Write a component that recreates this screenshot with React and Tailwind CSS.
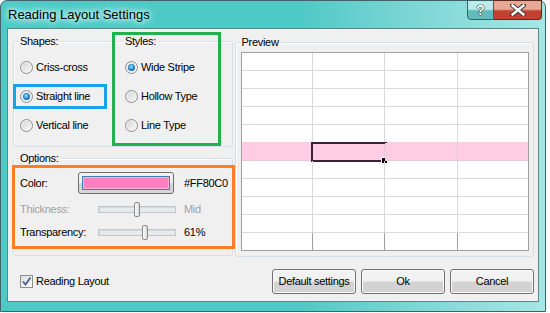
import React from "react";

// shared text style for dialog body
const body = "font-['Liberation_Sans',Arial,sans-serif] text-[11px] tracking-[-0.3px] text-black";

const Radio = ({ checked }) => (
	<span className="flex h-[13px] w-[13px] shrink-0 items-center justify-center rounded-full border border-[#8e8f8f] bg-linear-to-br from-[#d4d4d4] to-[#fbfbfb] shadow-[inset_0_0_0_1px_#f3f3f3]">
		{checked && (
			<span className="h-[7px] w-[7px] rounded-full bg-[radial-gradient(circle_at_45%_40%,#9ee4ff_0%,#2d8fd5_45%,#0c3466_100%)]" />
		)}
	</span>
);

const RadioRow = ({ label, checked, children }) => (
	<div className="relative flex h-[29px] items-center gap-[3px]">
		<Radio checked={checked} />
		<span>{label}</span>
		{children}
	</div>
);

const Legend = ({ children, className = "" }) => (
	<div className={`-mt-[8px] flex h-[14px] items-center ${className}`}>
		<span className="-mx-[2px] bg-[#f0f0f0] px-[2px] leading-[14px]">{children}</span>
	</div>
);

const Slider = ({ at }) => (
	<div className="relative h-[7px] w-[78px] border border-[#c3c7ca] bg-[#e7eaea] shadow-[inset_1px_1px_0_#d6d9db]">
		<span
			className={`absolute -top-[5px] h-[15px] w-[6px] rounded-[2px] border border-[#8a8a8a] bg-linear-to-r from-[#ffffff] to-[#d9d9d9] ${at}`}
		/>
	</div>
);

const Button = ({ children }) => (
	<div className="flex h-[25px] w-[84px] items-center justify-center rounded-[3px] border border-[#707070] bg-linear-to-b from-[#f2f2f2] from-45% to-[#d2d2d2] to-55% shadow-[inset_0_0_0_1px_#fbfbfb]">
		{children}
	</div>
);

const rows = Array.from({ length: 11 }, (_, i) => i);
const cols = [0, 1, 2, 3];

const App = () => {
	return (
		<div className="h-[313px] w-[550px] bg-white">
			<div className="flex h-[312px] w-[546px] flex-col rounded-t-[7px] border border-[#3f6366] bg-linear-to-r from-[#4fc9c6] from-55% to-[#a6e6e6]">
				{/* title bar */}
				<div className="flex h-[27px] justify-between">
					<div className="self-center pl-[7px] pt-[1px] font-['Liberation_Sans',Arial,sans-serif] text-[13px] text-black [text-shadow:0_0_8px_#d4f6f4,0_0_8px_#d4f6f4,0_0_4px_#d4f6f4]">
						Reading Layout Settings
					</div>
					<div className="mr-[3px] -mt-[1px] flex h-[20px] self-start">
						<div className="flex h-[20px] w-[27px] items-center justify-center rounded-bl-[4px] border border-[#3c5f62] bg-linear-to-b from-[#b9ecea] from-45% to-[#62bcbc] to-55% font-['Liberation_Sans',Arial,sans-serif] text-[14px] font-bold text-white [text-shadow:0_0_1px_#222,0_0_1px_#222,0_0_1px_#222]">
							?
						</div>
						<div className="flex h-[20px] w-[48px] items-center justify-center rounded-br-[4px] border border-l-0 border-[#5a2a22] bg-linear-to-b from-[#e9a896] from-45% to-[#c3412f] to-55%">
							<svg width="16" height="12" viewBox="0 0 16 12">
								<path d="M2 1 L14 11 M14 1 L2 11" stroke="#3a3a3a" strokeWidth="4.5" strokeLinecap="square" />
								<path d="M2.5 1.5 L13.5 10.5 M13.5 1.5 L2.5 10.5" stroke="#ffffff" strokeWidth="2.4" strokeLinecap="square" />
							</svg>
						</div>
					</div>
				</div>

				{/* client area */}
				<div className={`ml-[6px] h-[274px] w-[532px] border border-[#5b8889] bg-[#f0f0f0] pl-[5px] pr-[4px] pt-[12px] ${body}`}>
					<div className="flex gap-[2px]">
						<div className="flex w-[220px] flex-col">
							{/* shapes / styles */}
							<div className="flex h-[106px] rounded-[3px] border border-[#d5dfe5] shadow-[inset_1px_1px_0_#fff]">
								<div className="flex w-[105px] flex-col pl-[6px]">
									<Legend>Shapes:</Legend>
									<div className="mt-[5px]">
										<RadioRow label="Criss-cross" />
										<RadioRow label="Straight line" checked>
											<span className="absolute -left-[7px] top-[2px] h-[25px] w-[94px] border-[3px] border-[#1aa2e6]" />
										</RadioRow>
										<RadioRow label="Vertical line" />
									</div>
								</div>
								<div className="relative flex flex-1 flex-col pl-[6px]">
									<span className="absolute -left-[7px] -top-[10px] h-[114px] w-[109px] border-[3px] border-[#22b14c]" />
									<Legend>Styles:</Legend>
									<div className="mt-[5px]">
										<RadioRow label="Wide Stripe" checked />
										<RadioRow label="Hollow Type" />
										<RadioRow label="Line Type" />
									</div>
								</div>
							</div>

							{/* options */}
							<div className="relative mt-[11px] flex h-[98px] flex-col rounded-[3px] border border-[#d5dfe5] pl-[6px] shadow-[inset_1px_1px_0_#fff]">
								<span className="absolute -left-[2px] top-[6px] h-[84px] w-[223px] border-[3px] border-[#ff7f27]" />
								<Legend>Options:</Legend>
								<div className="mt-[7px] flex h-[22px] items-center">
									<span className="w-[58px]">Color:</span>
									<div className="flex h-[22px] w-[96px] items-center justify-center rounded-[3px] border border-[#707070] bg-linear-to-b from-[#f2f2f2] from-45% to-[#d6d6d6] to-55%">
										<span className="h-[14px] w-[88px] border border-[#3c7fb1] bg-[#ff80c0] shadow-[inset_0_0_0_1px_#ffb0d8]" />
									</div>
									<span className="ml-[10px]">#FF80C0</span>
								</div>
								<div className="flex h-[30px] items-center text-[#a3a3a3]">
									<span className="w-[78px]">Thickness:</span>
									<Slider at="left-[35px]" />
									<span className="ml-[8px]">Mid</span>
								</div>
								<div className="flex h-[16px] items-center">
									<span className="w-[78px]">Transparency:</span>
									<Slider at="left-[43px]" />
									<span className="ml-[8px]">61%</span>
								</div>
							</div>
						</div>

						{/* preview */}
						<div className="mt-[1px] flex h-[215px] w-[300px] flex-col rounded-[3px] border border-[#d5dfe5] pl-[6px] shadow-[inset_1px_1px_0_#fff]">
							<Legend>Preview</Legend>
							<div className="-ml-[1px] mt-[3px] grid w-[288px] grid-cols-[71px_72px_73px_70px] border-l border-r border-t border-[#a0a0a0] bg-white">
								{rows.map((r) =>
									cols.map((c) => (
										<div
											key={`${r}-${c}`}
											className={`relative h-[18px] ${c < 3 ? "border-r" : ""} border-b ${
												r === 10
													? "border-[#a0a0a0]"
													: r === 4
													? "border-r-[#dadada] border-b-[#ffcce6]"
													: r === 5
													? "border-[#e6c8d8] bg-[#ffcce6]"
													: "border-[#dadada]"
											}`}
										>
											{r === 5 && c === 1 && (
												<>
													<span className="absolute -left-[2px] -top-[1px] h-[20px] w-[76px] border-2 border-[#3c2034]" />
													<span className="absolute left-[69px] top-[15px] h-[5px] w-[5px] bg-black shadow-[-1px_-1px_0_#fff]" />
												</>
											)}
										</div>
									))
								)}
							</div>
						</div>
					</div>

					{/* bottom row */}
					<div className="mt-[12px] flex items-center">
						<span className="ml-[7px] flex h-[13px] w-[13px] items-center justify-center border border-[#8e8f8f] bg-linear-to-br from-[#dcdcdc] to-[#fdfdfd]">
							<svg width="11" height="11" viewBox="0 0 11 11">
								<path d="M2 5.5 L4.5 8.5 L9.5 1.5" fill="none" stroke="#4a5f95" strokeWidth="1.8" />
							</svg>
						</span>
						<span className="ml-[3px]">Reading Layout</span>
						<div className="ml-auto flex gap-[5px]">
							<Button>Default settings</Button>
							<Button>Ok</Button>
							<Button>Cancel</Button>
						</div>
					</div>
				</div>
			</div>
		</div>
	);
};

export default App;
